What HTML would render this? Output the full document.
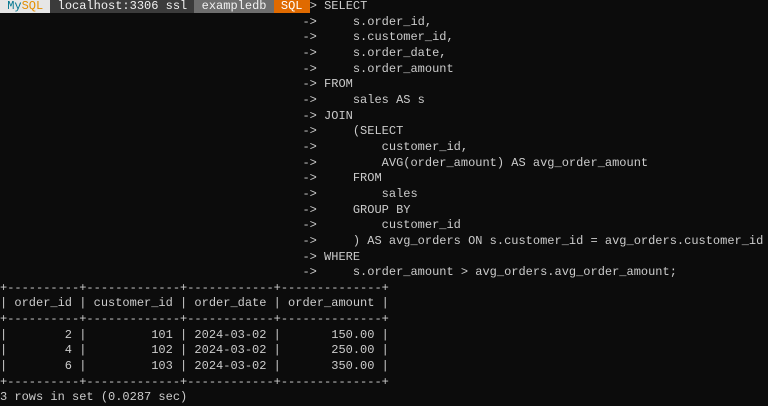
<!DOCTYPE html>
<html><head><meta charset="utf-8"><style>
html,body{margin:0;padding:0;background:#0c0c0c;width:768px;height:403px;overflow:hidden}
pre{margin:0;padding:0;position:absolute;left:0;top:-1px;font-family:"Liberation Mono",monospace;font-size:12px;line-height:15.65px;color:#cccccc;white-space:pre}
.a{background:#e6e6e6;color:#00758f}.a b{color:#e48e00;font-weight:normal}
.l{background:#3b3b3b;color:#f2f2f2}
.e{background:#6e6e6e;color:#f2f2f2}
.s{background:#e06a00;color:#ffffff}
</style></head><body><pre><span class="a"> My<b>SQL</b> </span><span class="l"> localhost:3306 ssl </span><span class="e"> exampledb </span><span class="s"> SQL </span>&gt; SELECT
                                          -&gt;     s.order_id,
                                          -&gt;     s.customer_id,
                                          -&gt;     s.order_date,
                                          -&gt;     s.order_amount
                                          -&gt; FROM
                                          -&gt;     sales AS s
                                          -&gt; JOIN
                                          -&gt;     (SELECT
                                          -&gt;         customer_id,
                                          -&gt;         AVG(order_amount) AS avg_order_amount
                                          -&gt;     FROM
                                          -&gt;         sales
                                          -&gt;     GROUP BY
                                          -&gt;         customer_id
                                          -&gt;     ) AS avg_orders ON s.customer_id = avg_orders.customer_id
                                          -&gt; WHERE
                                          -&gt;     s.order_amount &gt; avg_orders.avg_order_amount;
+----------+-------------+------------+--------------+
| order_id | customer_id | order_date | order_amount |
+----------+-------------+------------+--------------+
|        2 |         101 | 2024-03-02 |       150.00 |
|        4 |         102 | 2024-03-02 |       250.00 |
|        6 |         103 | 2024-03-02 |       350.00 |
+----------+-------------+------------+--------------+
3 rows in set (0.0287 sec)
</pre></body></html>
